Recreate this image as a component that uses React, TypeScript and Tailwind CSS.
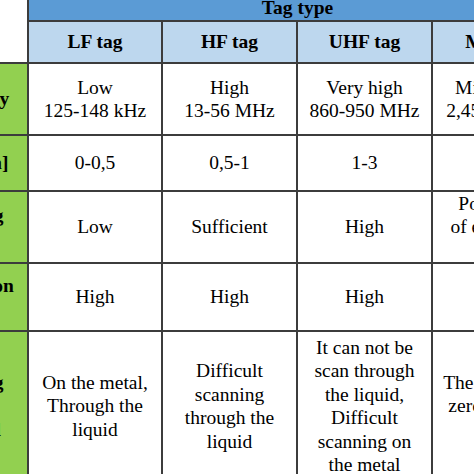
const tags = [
  {
    name: "LF tag",
    cells: [["Low", "125-148 kHz"], ["0-0,5"], ["Low"], ["High"], ["On the metal,", "Through the", "liquid"]],
  },
  {
    name: "HF tag",
    cells: [["High", "13-56 MHz"], ["0,5-1"], ["Sufficient"], ["High"], ["Difficult", "scanning", "through the", "liquid"]],
  },
  {
    name: "UHF tag",
    cells: [
      ["Very high", "860-950 MHz"],
      ["1-3"],
      ["High"],
      ["High"],
      ["It can not be", "scan through", "the liquid,", "Difficult", "scanning on", "the metal"],
    ],
  },
  {
    name: "MW tag",
    cells: [
      ["Microwave", "2,45-5,8 GHz"],
      ["1-10"],
      ["Possibility", "of electronic", "errors"],
      ["High"],
      ["The reading at", "zero distance", "only"],
    ],
  },
];

const params = [["Frequency"], ["Range [m]"], ["Scanning", "speed"], ["Penetration", "ability"], ["Scanning", "in metal", "or liquid"]];

function Lines({ lines }: { lines: string[] }) {
  return (
    <>
      {lines.map((l, i) => (
        <span key={i} className="block whitespace-nowrap">
          {l}
        </span>
      ))}
    </>
  );
}

export default function App() {
  return (
    <div className="w-[474px] h-[474px] overflow-hidden bg-white">
      <div className="-ml-[97px] -mt-[8px] w-max grid grid-cols-[124px_132px_133px_133px_133px] grid-rows-[28px_40px_70px_54px_70px_66px_148px] gap-[2px] bg-[#3c3c3c] font-['Liberation_Serif',serif] text-[19.5px] leading-[23.5px] text-black">
        <div className="row-span-2 bg-white" />
        <div className="col-span-4 bg-[#5b9bd5] flex items-center justify-center pt-[4px] font-bold">Tag type</div>
        {tags.map((t) => (
          <div key={t.name} className="bg-[#bdd7ee] flex items-center justify-center font-bold">
            {t.name}
          </div>
        ))}
        {params.map((p, r) => (
          <>
            <div key={`p${r}`} className="bg-[#92d050] flex flex-col items-center justify-center text-center font-bold">
              <Lines lines={p} />
            </div>
            {tags.map((t) => (
              <div key={`${t.name}${r}`} className="bg-white flex flex-col items-center justify-center text-center">
                <Lines lines={t.cells[r]} />
              </div>
            ))}
          </>
        ))}
      </div>
    </div>
  );
}
